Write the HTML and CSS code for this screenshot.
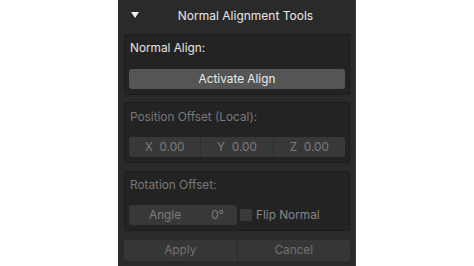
FILE: index.html
```html
<!DOCTYPE html>
<html>
<head>
<meta charset="utf-8">
<link rel="stylesheet" href="styles.css">
</head>
<body>
<div class="panel">
  <div class="header">
    <span class="tri"></span>
    <span class="title">Normal Alignment Tools</span>
  </div>
  <div class="box first">
    <div class="label">Normal Align:</div>
    <div class="btn primary">Activate Align</div>
  </div>
  <div class="box disabled second">
    <div class="label">Position Offset (Local):</div>
    <div class="fields">
      <div class="field">X&nbsp;&nbsp;0.00</div>
      <div class="field">Y&nbsp;&nbsp;0.00</div>
      <div class="field">Z&nbsp;&nbsp;0.00</div>
    </div>
  </div>
  <div class="box disabled third">
    <div class="label">Rotation Offset:</div>
    <div class="rotrow">
      <div class="field angle"><span>Angle</span><span>0°</span></div>
      <span class="check"></span>
      <span class="checklabel">Flip Normal</span>
    </div>
  </div>
  <div class="actions">
    <div class="act">Apply</div>
    <div class="act">Cancel</div>
  </div>
</div>
</body>
</html>
```
FILE: styles.css
```css
html, body {
  margin: 0;
  padding: 0;
  background: #ffffff;
  height: 100%;
}
body {
  font-family: Inter, "DejaVu Sans", sans-serif;
  font-size: 11.8px;
}
.panel {
  margin-left: 118px;
  width: 238px;
  height: 266px;
  background: #2a2a2a;
  box-sizing: border-box;
  padding: 0 5px 0 6px;
  display: flex;
  flex-direction: column;
  border-right: 1px solid #3a3a3a;
}
.header {
  height: 31px;
  display: flex;
  align-items: center;
  position: relative;
  justify-content: center;
  color: #e8e8e8;
  font-size: 12px;
  box-sizing: border-box;
  padding-bottom: 1px;
}
.tri {
  position: absolute;
  left: 7px;
  top: 12px;
  width: 0;
  height: 0;
  border-left: 4px solid transparent;
  border-right: 4px solid transparent;
  border-top: 6px solid #f0f0f0;
}
.title {
  margin-left: 17px;
}
.box {
  background: #232323;
  border: 1px solid #1c1c1c;
  border-radius: 3px;
  padding: 7px 4px 5px 4px;
  display: flex;
  flex-direction: column;
  margin-top: 7px;
}
.box.first {
  margin-top: 3px;
  padding-top: 6px;
  padding-bottom: 5px;
}
.box.third {
  margin-top: 8px;
  padding-top: 6px;
}
.label {
  height: 14px;
  line-height: 14px;
  color: #e4e4e4;
  padding-left: 1px;
  margin-bottom: 13px;
}
.first .label {
  margin-bottom: 14px;
}
.btn {
  height: 20px;
  line-height: 20px;
  border-radius: 3px;
  text-align: center;
}
.primary {
  background: #555555;
  color: #eaeaea;
}
.disabled .label {
  color: #787878;
}
.fields {
  display: flex;
  height: 20px;
  border-radius: 3px;
  overflow: hidden;
  background: #383838;
}
.field {
  flex: 1;
  line-height: 20px;
  text-align: center;
  color: #7c7c7c;
  background: #383838;
}
.field + .field {
  border-left: 1px solid #2e2e2e;
}
.rotrow {
  display: flex;
  align-items: center;
  height: 20px;
}
.angle {
  flex: none;
  width: 108px;
  height: 20px;
  border-radius: 3px;
  display: flex;
  justify-content: space-between;
  padding: 0 13px 0 20px;
  box-sizing: border-box;
}
.check {
  width: 12px;
  height: 12px;
  background: #3a3a3a;
  border-radius: 2px;
  margin-left: 3px;
}
.checklabel {
  margin-left: 4px;
  color: #878787;
}
.actions {
  display: flex;
  height: 21px;
  margin-top: 9px;
  gap: 1px;
}
.act {
  flex: 1;
  background: #363636;
  color: #727272;
  line-height: 21px;
  text-align: center;
}
.act:first-child {
  border-radius: 3px 0 0 3px;
}
.act:last-child {
  border-radius: 0 3px 3px 0;
}
```
